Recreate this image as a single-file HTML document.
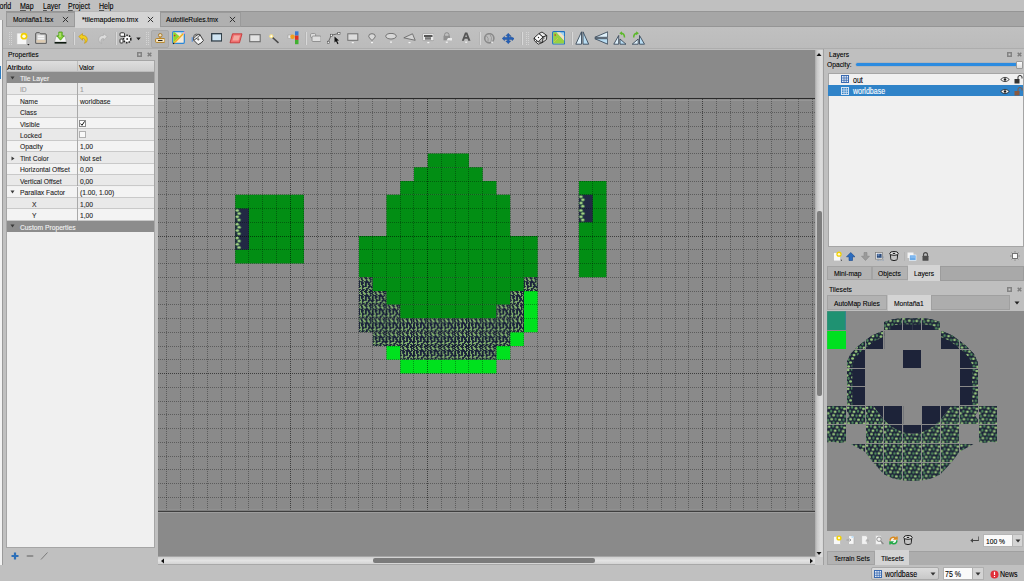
<!DOCTYPE html>
<html><head><meta charset="utf-8">
<style>
*{margin:0;padding:0;box-sizing:border-box}
html,body{width:1024px;height:581px;overflow:hidden;background:#c0c0c0;font-family:"Liberation Sans",sans-serif;font-size:7.8px;color:#000}
.a{position:absolute}
u{text-decoration-thickness:0.6px;text-underline-offset:0.6px;text-decoration-color:#555}
.t{position:absolute;white-space:nowrap;line-height:1;-webkit-text-stroke:0.1px currentColor;transform:scaleX(0.86);transform-origin:0 0}
</style></head><body>

<div class="a" style="left:0px;top:0px;width:1024px;height:11px;background:#c0c0c0"></div>
<div class="t" style="left:-6.6px;top:2.8px;font-size:8.2px">World</div>
<div class="t" style="left:20px;top:2.8px;font-size:8.2px"><u>M</u>ap</div>
<div class="t" style="left:43px;top:2.8px;font-size:8.2px"><u>L</u>ayer</div>
<div class="t" style="left:68px;top:2.8px;font-size:8.2px"><u>P</u>roject</div>
<div class="t" style="left:98.5px;top:2.8px;font-size:8.2px"><u>H</u>elp</div>
<div class="a" style="left:0px;top:11px;width:1024px;height:17px;background:#c0c0c0"></div>
<div class="a" style="left:6px;top:11px;width:1018px;height:16px;background:#a6a6a6;border-top:1px solid #959595;border-bottom:1px solid #959595"></div>
<div class="a" style="left:6px;top:11.5px;width:69px;height:15.5px;background:#b0b0b0;border:1px solid #9a9a9a"></div>
<div class="t" style="left:12.5px;top:15.7px;">Montaña1.tsx</div>
<div class="a" style="left:75px;top:11px;width:85px;height:17px;background:#d4d4d4;border-top:1px solid #b8b8b8"></div>
<div class="t" style="left:82.3px;top:15.7px;transform:scaleX(0.9)">*tilemapdemo.tmx</div>
<div class="a" style="left:159.5px;top:11.5px;width:81px;height:15.5px;background:#b0b0b0;border:1px solid #9a9a9a"></div>
<div class="t" style="left:166.3px;top:15.7px;">AutotileRules.tmx</div>
<svg class="a" style="left:62.400000000000006px;top:16.2px" width="7" height="7" viewBox="0 0 7 7"><path d="M0.9 0.9L6.1 6.1M6.1 0.9L0.9 6.1" stroke="#333" stroke-width="1"/></svg>
<svg class="a" style="left:146.7px;top:16.2px" width="7" height="7" viewBox="0 0 7 7"><path d="M0.9 0.9L6.1 6.1M6.1 0.9L0.9 6.1" stroke="#333" stroke-width="1"/></svg>
<svg class="a" style="left:228.5px;top:16.2px" width="7" height="7" viewBox="0 0 7 7"><path d="M0.9 0.9L6.1 6.1M6.1 0.9L0.9 6.1" stroke="#333" stroke-width="1"/></svg>
<div class="a" style="left:0px;top:28px;width:1024px;height:21px;background:linear-gradient(#c0c0c0,#bbbbbb)"></div>
<div class="a" style="left:0px;top:48px;width:1024px;height:1px;background:#adadad"></div>
<svg class="a" style="left:9px;top:32px" width="3" height="13" viewBox="0 0 3 13"><rect x="0" y="0" width="1" height="1" fill="#d4d4d4"/><rect x="2" y="0" width="1" height="1" fill="#d4d4d4"/><rect x="0" y="2" width="1" height="1" fill="#d4d4d4"/><rect x="2" y="2" width="1" height="1" fill="#d4d4d4"/><rect x="0" y="4" width="1" height="1" fill="#d4d4d4"/><rect x="2" y="4" width="1" height="1" fill="#d4d4d4"/><rect x="0" y="6" width="1" height="1" fill="#d4d4d4"/><rect x="2" y="6" width="1" height="1" fill="#d4d4d4"/><rect x="0" y="8" width="1" height="1" fill="#d4d4d4"/><rect x="2" y="8" width="1" height="1" fill="#d4d4d4"/><rect x="0" y="10" width="1" height="1" fill="#d4d4d4"/><rect x="2" y="10" width="1" height="1" fill="#d4d4d4"/><rect x="0" y="12" width="1" height="1" fill="#d4d4d4"/><rect x="2" y="12" width="1" height="1" fill="#d4d4d4"/></svg>
<svg class="a" style="left:16px;top:32px" width="14" height="14" viewBox="0 0 14 14"><rect x="0.8" y="1" width="10" height="11.5" fill="#f6f6f6" stroke="#bdbdbd" stroke-width="0.8"/><circle cx="8" cy="4.2" r="3.4" fill="#f2d000"/><circle cx="8" cy="4.2" r="1.8" fill="#fffbe0"/><path d="M11.2 12L13.6 12L12.4 13.4Z" fill="#222"/></svg>
<svg class="a" style="left:35px;top:32px" width="12" height="12" viewBox="0 0 12 12"><path d="M0.7 11.3V1.8Q0.7 0.7 1.8 0.7H4.5L5.5 1.8H10.2Q11.3 1.8 11.3 2.9V11.3Z" fill="#c6c6c6" stroke="#4a4a4a" stroke-width="0.9"/><rect x="2.6" y="3.3" width="6.8" height="4.2" fill="#f6f6f6"/><path d="M2.6 5.4H9.4" stroke="#bbb" stroke-width="0.5"/><rect x="1.5" y="8" width="9" height="2.6" fill="#dccab0"/></svg>
<svg class="a" style="left:54px;top:31px" width="13" height="13" viewBox="0 0 13 13"><path d="M1.8 5.5L11.2 5.5L12.4 11L0.6 11Z" fill="#f6f6f6" stroke="#9a9a9a" stroke-width="0.6"/><rect x="0.6" y="11" width="11.8" height="1.6" fill="#0e1a10"/><path d="M4.8 1H8.2V4.8H10.2L6.5 9.2L2.8 4.8H4.8Z" fill="#8ad23a" stroke="#4aa018" stroke-width="0.8"/><path d="M6 2V6" stroke="#e6f0c0" stroke-width="0.8"/></svg>
<div class="a" style="left:72.5px;top:32px;width:1px;height:13px;background:#b4b4b4;box-shadow:1px 0 0 #d8d8d8"></div>
<svg class="a" style="left:78px;top:33px" width="10" height="11" viewBox="0 0 10 11"><path d="M0.8 3.5L4.5 0.6V2.4Q9.5 2.4 9.3 7Q9 9.8 6.5 10.3Q8 8 6.6 6.2Q5.8 5.3 4.5 5.5V7.3Z" fill="#f2cf1e" stroke="#c49200" stroke-width="0.6"/></svg>
<svg class="a" style="left:97.5px;top:33px" width="10" height="11" viewBox="0 0 10 11"><path d="M9.2 3.5L5.5 0.6V2.4Q0.5 2.4 0.7 7Q1 9.8 3.5 10.3Q2 8 3.4 6.2Q4.2 5.3 5.5 5.5V7.3Z" fill="#dcdcdc" stroke="#a8a8a8" stroke-width="0.6"/></svg>
<div class="a" style="left:114.5px;top:32px;width:1px;height:13px;background:#b4b4b4;box-shadow:1px 0 0 #d8d8d8"></div>
<svg class="a" style="left:119px;top:32px" width="13" height="12" viewBox="0 0 13 12"><rect x="1" y="0.8" width="4.5" height="3.5" rx="1" fill="#fff" stroke="#222" stroke-width="0.9"/><rect x="1" y="7" width="3" height="4" rx="0.8" fill="#fff" stroke="#222" stroke-width="0.9"/><circle cx="8.2" cy="7" r="3.6" fill="#fff" stroke="#222" stroke-width="1.6" stroke-dasharray="1.6 1"/><circle cx="8.2" cy="7" r="1" fill="#333"/></svg>
<svg class="a" style="left:135.5px;top:37px" width="5" height="4" viewBox="0 0 5 4"><path d="M0.3 0.5H4.7L2.5 3.2Z" fill="#222"/></svg>
<svg class="a" style="left:146px;top:32px" width="3" height="13" viewBox="0 0 3 13"><rect x="0" y="0" width="1" height="1" fill="#d4d4d4"/><rect x="2" y="0" width="1" height="1" fill="#d4d4d4"/><rect x="0" y="2" width="1" height="1" fill="#d4d4d4"/><rect x="2" y="2" width="1" height="1" fill="#d4d4d4"/><rect x="0" y="4" width="1" height="1" fill="#d4d4d4"/><rect x="2" y="4" width="1" height="1" fill="#d4d4d4"/><rect x="0" y="6" width="1" height="1" fill="#d4d4d4"/><rect x="2" y="6" width="1" height="1" fill="#d4d4d4"/><rect x="0" y="8" width="1" height="1" fill="#d4d4d4"/><rect x="2" y="8" width="1" height="1" fill="#d4d4d4"/><rect x="0" y="10" width="1" height="1" fill="#d4d4d4"/><rect x="2" y="10" width="1" height="1" fill="#d4d4d4"/><rect x="0" y="12" width="1" height="1" fill="#d4d4d4"/><rect x="2" y="12" width="1" height="1" fill="#d4d4d4"/></svg>
<div class="a" style="left:150.5px;top:30px;width:18.5px;height:17.5px;background:#b3b3b3;border:1px solid #a9a9a9;border-radius:2px"></div>
<svg class="a" style="left:154.5px;top:32.5px" width="10.5" height="11" viewBox="0 0 10.5 11"><circle cx="5.25" cy="2.3" r="1.8" fill="#f0e2c0" stroke="#a06a10" stroke-width="0.8"/><rect x="4.3" y="3.6" width="1.9" height="2.4" fill="#c99030"/><rect x="0.6" y="5.6" width="9.3" height="3.8" rx="0.8" fill="#f8ecd0" stroke="#b07810" stroke-width="0.9"/><rect x="3" y="7" width="4.5" height="1" fill="#222"/></svg>
<svg class="a" style="left:171.5px;top:31px" width="13.5" height="13.5" viewBox="0 0 13.5 13.5"><rect x="0.7" y="0.7" width="11.6" height="11.6" rx="1" fill="#f2e8d8" stroke="#2a86d8" stroke-width="1.2"/><path d="M8 1.3H11.7V4.8Z" fill="#8ccff2"/><path d="M1.3 1.3H2.8L8.5 6.3L2.6 11.7H1.3Z" fill="#8ed62e"/><circle cx="2.6" cy="4.6" r="0.8" fill="#e02020"/><path d="M2 12.2L11.8 2.2" stroke="#f6d23a" stroke-width="1.8"/><path d="M2.6 11.6L11.2 2.8" stroke="#e02a2a" stroke-width="0.6" stroke-dasharray="0.8 0.6"/><path d="M11.3 2.7L12.9 1.1" stroke="#e8a6d8" stroke-width="1.7"/><path d="M1.2 12.9L2.2 11.9" stroke="#111" stroke-width="1.2"/></svg>
<svg class="a" style="left:191px;top:31.5px" width="13" height="13" viewBox="0 0 13 13"><g transform="rotate(-38 7 7)"><path d="M2.8 4.5H11.2L10.4 11.5Q7 12.6 3.6 11.5Z" fill="#f4f4f4" stroke="#3a3a3a" stroke-width="0.9"/><ellipse cx="7" cy="4.5" rx="4.2" ry="1.3" fill="#dcdcdc" stroke="#3a3a3a" stroke-width="0.8"/><path d="M3.5 4.2Q7 -1.2 10.5 4.2" fill="none" stroke="#555" stroke-width="0.8"/><circle cx="7" cy="7.5" r="1.1" fill="#666"/></g><path d="M1.3 5.2V9.8" stroke="#6a96d0" stroke-width="1.4"/></svg>
<svg class="a" style="left:210.5px;top:32.5px" width="11.5" height="9.5" viewBox="0 0 11.5 9.5"><rect x="0.7" y="0.7" width="10" height="7.3" fill="#cfe4f2" stroke="#2c3a44" stroke-width="1.3"/><rect x="1" y="8.6" width="10" height="0.9" fill="#999" opacity="0.6"/></svg>
<svg class="a" style="left:228.5px;top:32.5px" width="14" height="11" viewBox="0 0 14 11"><path d="M3.5 0.8L13 0.8L10.5 9.8L1 9.8Z" fill="#f07070" stroke="#c03030" stroke-width="0.8"/><path d="M5 2.5L11 2.5L9.5 7.5L3.5 7.5Z" fill="#f4a8a0"/></svg>
<svg class="a" style="left:248.5px;top:34px" width="12" height="8.5" viewBox="0 0 12 8.5"><rect x="0.7" y="0.7" width="10.5" height="7" fill="#e2e2e2" stroke="#6c6c6c" stroke-width="1.1"/></svg>
<svg class="a" style="left:268.5px;top:34px" width="10.5" height="9.5" viewBox="0 0 10.5 9.5"><path d="M3 3L9.5 8.8" stroke="#4a4a4a" stroke-width="1.6"/><circle cx="2.3" cy="2.3" r="2" fill="#ffe680"/><circle cx="2.3" cy="2.3" r="1" fill="#fff"/></svg>
<svg class="a" style="left:286.5px;top:31px" width="12" height="13.5" viewBox="0 0 12 13.5"><rect x="1" y="4" width="4" height="3.5" fill="#e8e8e8" stroke="#999" stroke-width="0.5"/><circle cx="5.5" cy="5.8" r="2.3" fill="#f0a020"/><rect x="8" y="0.3" width="3.5" height="4.3" fill="#3a7ad0"/><rect x="8" y="4.6" width="3.5" height="4.3" fill="#e03020"/><rect x="8" y="8.9" width="3.5" height="4.3" fill="#40b030"/></svg>
<div class="a" style="left:304.5px;top:32px;width:1px;height:13px;background:#b4b4b4;box-shadow:1px 0 0 #d8d8d8"></div>
<svg class="a" style="left:309.5px;top:33px" width="11.5" height="9" viewBox="0 0 11.5 9"><rect x="0.6" y="0.6" width="5" height="4" rx="1" fill="#e6e6e6" stroke="#8a8a8a" stroke-width="0.9"/><rect x="2" y="3" width="9" height="5.5" rx="1" fill="#dedede" stroke="#8a8a8a" stroke-width="0.9"/></svg>
<svg class="a" style="left:326.5px;top:32px" width="14" height="12.5" viewBox="0 0 14 12.5"><path d="M1.2 10.2L4.3 3.2L11.8 1.5" stroke="#555" stroke-width="0.8" fill="none"/><rect x="0.2" y="9.2" width="2" height="2" fill="#fff" stroke="#333" stroke-width="0.5"/><rect x="3.3" y="2.2" width="2" height="2" fill="#fff" stroke="#333" stroke-width="0.5"/><rect x="10.8" y="0.5" width="2.2" height="2" fill="#fff" stroke="#333" stroke-width="0.5"/><path d="M7.5 4.5L7.5 10.5L9 9.2L10.5 12.2L11.5 11.6L10 8.8L12 8.5Z" fill="#111"/></svg>
<svg class="a" style="left:347px;top:32.5px" width="12" height="11" viewBox="0 0 12 11"><rect x="0.8" y="0.8" width="10" height="6.5" fill="#dcdcdc" stroke="#707070" stroke-width="1"/><rect x="4.8" y="9" width="2" height="1.2" fill="#f4f4f4"/></svg>
<svg class="a" style="left:368px;top:32.5px" width="8" height="11" viewBox="0 0 8 11"><path d="M4 7.5Q0.7 4.5 0.7 3.3Q0.7 0.7 4 0.7Q7.3 0.7 7.3 3.3Q7.3 4.5 4 7.5Z" fill="#d8d8d8" stroke="#6a6a6a" stroke-width="0.9"/><rect x="3" y="9" width="2" height="1.2" fill="#f4f4f4"/></svg>
<svg class="a" style="left:384.5px;top:33px" width="12" height="10.5" viewBox="0 0 12 10.5"><ellipse cx="6" cy="3.2" rx="5.3" ry="2.8" fill="#d8d8d8" stroke="#6a6a6a" stroke-width="0.9"/><rect x="5" y="8.5" width="2" height="1.2" fill="#f4f4f4"/></svg>
<svg class="a" style="left:402.5px;top:32.5px" width="13" height="11" viewBox="0 0 13 11"><path d="M0.8 4.8L9.5 0.8L12.2 7.3Z" fill="#d4d4d4" stroke="#6a6a6a" stroke-width="0.9"/><rect x="5.5" y="9" width="2" height="1.2" fill="#f4f4f4"/></svg>
<svg class="a" style="left:421.5px;top:32.5px" width="12.5" height="11" viewBox="0 0 12.5 11"><rect x="0.6" y="0.6" width="11.3" height="7" rx="1" fill="#ececec" stroke="#9a9a9a" stroke-width="0.7"/><rect x="2" y="2" width="8.5" height="2" fill="#555"/><rect x="3" y="4.2" width="6" height="2.5" fill="#777"/><rect x="5.3" y="9" width="2" height="1.2" fill="#f4f4f4"/></svg>
<svg class="a" style="left:442px;top:32px" width="10.5" height="11.5" viewBox="0 0 10.5 11.5"><path d="M2.6 4V2.6Q2.6 0.7 4.8 0.7Q7 0.7 7 2.6V4" stroke="#8a8a8a" stroke-width="1" fill="none"/><rect x="1.5" y="3.8" width="6.5" height="4.5" fill="#909090"/><path d="M6 6L10 6L10 8.6L4.5 8.6Z" fill="#eaeaea"/><rect x="3.8" y="9.6" width="2" height="1.2" fill="#f4f4f4"/></svg>
<svg class="a" style="left:460.5px;top:32px" width="10.5" height="11.5" viewBox="0 0 10.5 11.5"><path d="M0.8 8.7L4 0.5H6.3L9.5 8.7H7.2L6.6 6.8H3.6L3 8.7ZM4.2 5H6L5.1 2.3Z" fill="#555"/><rect x="4.2" y="9.6" width="2" height="1.2" fill="#f4f4f4"/></svg>
<div class="a" style="left:478.5px;top:32px;width:1px;height:13px;background:#b4b4b4;box-shadow:1px 0 0 #d8d8d8"></div>
<svg class="a" style="left:482.5px;top:32.5px" width="13" height="11" viewBox="0 0 13 11"><circle cx="6.3" cy="5.3" r="4.6" fill="none" stroke="#8a8a8a" stroke-width="1.6"/><path d="M3.5 3Q6 5 5 8.5M7 1.5Q9.5 4 8 9" stroke="#9a9a9a" stroke-width="1" fill="none"/><rect x="8.3" y="8.5" width="1.6" height="1.6" fill="#eee"/></svg>
<svg class="a" style="left:501.5px;top:32.5px" width="12.5" height="11" viewBox="0 0 12.5 11"><path d="M6.25 0.3L8.7 2.8H7.2V4.3H8.7V2.8V4.3H10L12.3 5.5L10 7.7V6.5H7.2V8H8.7L6.25 10.7L3.8 8H5.3V6.5H2.5V7.7L0.2 5.5L2.5 3.3V4.5H5.3V2.8H3.8Z" fill="#2560b8" stroke="#1a4a90" stroke-width="0.4"/></svg>
<div class="a" style="left:520.5px;top:32px;width:1px;height:13px;background:#b4b4b4;box-shadow:1px 0 0 #d8d8d8"></div>
<svg class="a" style="left:526px;top:32px" width="3" height="13" viewBox="0 0 3 13"><rect x="0" y="0" width="1" height="1" fill="#d4d4d4"/><rect x="2" y="0" width="1" height="1" fill="#d4d4d4"/><rect x="0" y="2" width="1" height="1" fill="#d4d4d4"/><rect x="2" y="2" width="1" height="1" fill="#d4d4d4"/><rect x="0" y="4" width="1" height="1" fill="#d4d4d4"/><rect x="2" y="4" width="1" height="1" fill="#d4d4d4"/><rect x="0" y="6" width="1" height="1" fill="#d4d4d4"/><rect x="2" y="6" width="1" height="1" fill="#d4d4d4"/><rect x="0" y="8" width="1" height="1" fill="#d4d4d4"/><rect x="2" y="8" width="1" height="1" fill="#d4d4d4"/><rect x="0" y="10" width="1" height="1" fill="#d4d4d4"/><rect x="2" y="10" width="1" height="1" fill="#d4d4d4"/><rect x="0" y="12" width="1" height="1" fill="#d4d4d4"/><rect x="2" y="12" width="1" height="1" fill="#d4d4d4"/></svg>
<svg class="a" style="left:532.5px;top:31px" width="15" height="14" viewBox="0 0 15 14"><path d="M1 7L6 2.5L10 6L5 10.8Z" fill="#fff" stroke="#222" stroke-width="0.9"/><path d="M6 2.5L9 1L13.8 4.5L10 6Z" fill="#eaeaea" stroke="#222" stroke-width="0.9"/><path d="M10 6L13.8 4.5L13.5 8.5L9.5 11.5Z" fill="#ddd" stroke="#222" stroke-width="0.9"/><path d="M5 10.8L1 7L1.5 9.8L5.3 13.2L9.5 11.5Z" fill="#f4f4f4" stroke="#222" stroke-width="0.9"/><circle cx="5.5" cy="6.5" r="0.7" fill="#222"/><circle cx="11" cy="7" r="0.6" fill="#222"/><circle cx="3.5" cy="10" r="0.6" fill="#222"/></svg>
<svg class="a" style="left:551.5px;top:30.5px" width="13.5" height="14" viewBox="0 0 13.5 14"><rect x="0.7" y="0.7" width="12" height="12.3" rx="1" fill="#9fd4f0" stroke="#1e70c0" stroke-width="1.2"/><path d="M1.3 1.3H4.5L12.1 9.5V12.4H1.3Z" fill="#98d040"/><path d="M4.5 1.3H8L12.1 5.5V9.5Z" fill="#f4e2c0"/><circle cx="3.2" cy="4" r="0.8" fill="#e02020"/><path d="M2 11L6 7" stroke="#d8c050" stroke-width="0.8"/></svg>
<div class="a" style="left:571px;top:32px;width:1px;height:13px;background:#b4b4b4;box-shadow:1px 0 0 #d8d8d8"></div>
<svg class="a" style="left:575px;top:31px" width="14.5" height="14" viewBox="0 0 14.5 14"><path d="M6.5 0.8L6.5 13.2L0.8 13.2Z" fill="#dff0fa" stroke="#3a4a5a" stroke-width="0.9"/><path d="M8 0.8L8 13.2L13.7 13.2Z" fill="#b8dcf2" stroke="#3a4a5a" stroke-width="0.9"/></svg>
<svg class="a" style="left:593.5px;top:31px" width="14.5" height="14" viewBox="0 0 14.5 14"><path d="M13.7 0.8L13.7 6.3L0.8 6.3Z" fill="#dff0fa" stroke="#3a4a5a" stroke-width="0.9"/><path d="M13.7 7.7L13.7 13.2L0.8 7.7Z" fill="#b8dcf2" stroke="#3a4a5a" stroke-width="0.9"/></svg>
<svg class="a" style="left:612.5px;top:31px" width="14" height="14" viewBox="0 0 14 14"><path d="M5.7 4.5L5.7 13.2L0.8 13.2Z" fill="#dff0fa" stroke="#3a4a5a" stroke-width="0.9"/><path d="M7 8L7 13.2L13 13.2Z" fill="#b8dcf2" stroke="#3a4a5a" stroke-width="0.9"/><path d="M11.5 6.5Q11.5 2.2 8 2.2" stroke="#5cb82a" stroke-width="1.5" fill="none"/><path d="M6.3 2.2L9 0.2V4.2Z" fill="#5cb82a"/></svg>
<svg class="a" style="left:631px;top:31px" width="14.5" height="14" viewBox="0 0 14.5 14"><path d="M8.5 4.5L8.5 13.2L13.5 13.2Z" fill="#b8dcf2" stroke="#3a4a5a" stroke-width="0.9"/><path d="M7.2 8L7.2 13.2L1.2 13.2Z" fill="#dff0fa" stroke="#3a4a5a" stroke-width="0.9"/><path d="M2.7 6.5Q2.7 2.2 6.2 2.2" stroke="#5cb82a" stroke-width="1.5" fill="none"/><path d="M7.9 2.2L5.2 0.2V4.2Z" fill="#5cb82a"/></svg>
<div class="a" style="left:0px;top:20px;width:3px;height:545px;background:#f2f2f2;border-right:1px solid #9a9a9a"></div>
<div class="a" style="left:0px;top:66px;width:1px;height:13px;background:#2a7ac0"></div>
<div class="t" style="left:8px;top:51.2px;">Properties</div>
<div class="a" style="left:6px;top:60px;width:149px;height:488px;background:#f0f0f0;border:1px solid #a5a5a5"></div>
<div class="a" style="left:7px;top:61px;width:147px;height:11px;background:linear-gradient(#dedede,#cfcfcf);border-bottom:1px solid #bcbcbc"></div>
<div class="a" style="left:77px;top:61px;width:1px;height:11px;background:#bdbdbd"></div>
<div class="t" style="left:7.3px;top:63.5px;transform:scaleX(0.92)">Atributo</div>
<div class="t" style="left:79px;top:63.5px;">Valor</div>
<div class="a" style="left:7px;top:72.0px;width:147px;height:11.45px;background:#8c8c8c"></div>
<svg class="a" style="left:10px;top:75.5px" width="5" height="4" viewBox="0 0 5 4"><path d="M0.5 0.5L4.5 0.5L2.5 3.5Z" fill="#3a3a3a"/></svg>
<div class="t" style="left:19.5px;top:74.7px;color:#f4f4f4">Tile Layer</div>
<div class="a" style="left:7px;top:83.45px;width:147px;height:11.45px;background:#e9e9e9;border-bottom:1px solid #c9c9c9"></div>
<div class="a" style="left:77px;top:83.45px;width:1px;height:11.45px;background:#a9a9a9"></div>
<div class="t" style="left:19.5px;top:86.15px;color:#9a9a9a">ID</div>
<div class="t" style="left:80px;top:86.15px;color:#9a9a9a">1</div>
<div class="a" style="left:7px;top:94.9px;width:147px;height:11.45px;background:#f3f3f3;border-bottom:1px solid #c9c9c9"></div>
<div class="a" style="left:77px;top:94.9px;width:1px;height:11.45px;background:#a9a9a9"></div>
<div class="t" style="left:19.5px;top:97.60000000000001px;color:#1c1c1c">Name</div>
<div class="t" style="left:80px;top:97.60000000000001px;color:#1c1c1c">worldbase</div>
<div class="a" style="left:7px;top:106.35px;width:147px;height:11.45px;background:#e9e9e9;border-bottom:1px solid #c9c9c9"></div>
<div class="a" style="left:77px;top:106.35px;width:1px;height:11.45px;background:#a9a9a9"></div>
<div class="t" style="left:19.5px;top:109.05px;color:#1c1c1c">Class</div>
<div class="a" style="left:7px;top:117.8px;width:147px;height:11.45px;background:#f3f3f3;border-bottom:1px solid #c9c9c9"></div>
<div class="a" style="left:77px;top:117.8px;width:1px;height:11.45px;background:#a9a9a9"></div>
<div class="t" style="left:19.5px;top:120.5px;color:#1c1c1c">Visible</div>
<div class="a" style="left:79px;top:119.8px;width:7px;height:7px;background:#fff;border:1px solid #8a8a8a"></div>
<svg class="a" style="left:79px;top:119.8px" width="7" height="7" viewBox="0 0 7 7"><path d="M1.6 3.6L3 5.3L5.6 1.4" stroke="#111" stroke-width="1" fill="none"/></svg>
<div class="a" style="left:7px;top:129.25px;width:147px;height:11.45px;background:#e9e9e9;border-bottom:1px solid #c9c9c9"></div>
<div class="a" style="left:77px;top:129.25px;width:1px;height:11.45px;background:#a9a9a9"></div>
<div class="t" style="left:19.5px;top:131.95px;color:#1c1c1c">Locked</div>
<div class="a" style="left:79px;top:131.25px;width:7px;height:7px;background:#f8f8f8;border:1px solid #b0b0b0"></div>
<div class="a" style="left:7px;top:140.7px;width:147px;height:11.45px;background:#f3f3f3;border-bottom:1px solid #c9c9c9"></div>
<div class="a" style="left:77px;top:140.7px;width:1px;height:11.45px;background:#a9a9a9"></div>
<div class="t" style="left:19.5px;top:143.39999999999998px;color:#1c1c1c">Opacity</div>
<div class="t" style="left:80px;top:143.39999999999998px;color:#1c1c1c">1,00</div>
<div class="a" style="left:7px;top:152.15px;width:147px;height:11.45px;background:#e9e9e9;border-bottom:1px solid #c9c9c9"></div>
<div class="a" style="left:77px;top:152.15px;width:1px;height:11.45px;background:#a9a9a9"></div>
<div class="t" style="left:19.5px;top:154.85px;color:#1c1c1c">Tint Color</div>
<svg class="a" style="left:11px;top:155.65px" width="4" height="5" viewBox="0 0 4 5"><path d="M0.5 0.5L3.5 2.5L0.5 4.5Z" fill="#3a3a3a"/></svg>
<div class="t" style="left:80px;top:154.85px;color:#1c1c1c">Not set</div>
<div class="a" style="left:7px;top:163.6px;width:147px;height:11.45px;background:#f3f3f3;border-bottom:1px solid #c9c9c9"></div>
<div class="a" style="left:77px;top:163.6px;width:1px;height:11.45px;background:#a9a9a9"></div>
<div class="t" style="left:19.5px;top:166.29999999999998px;color:#1c1c1c">Horizontal Offset</div>
<div class="t" style="left:80px;top:166.29999999999998px;color:#1c1c1c">0,00</div>
<div class="a" style="left:7px;top:175.05px;width:147px;height:11.45px;background:#e9e9e9;border-bottom:1px solid #c9c9c9"></div>
<div class="a" style="left:77px;top:175.05px;width:1px;height:11.45px;background:#a9a9a9"></div>
<div class="t" style="left:19.5px;top:177.75px;color:#1c1c1c">Vertical Offset</div>
<div class="t" style="left:80px;top:177.75px;color:#1c1c1c">0,00</div>
<div class="a" style="left:7px;top:186.5px;width:147px;height:11.45px;background:#f3f3f3;border-bottom:1px solid #c9c9c9"></div>
<div class="a" style="left:77px;top:186.5px;width:1px;height:11.45px;background:#a9a9a9"></div>
<div class="t" style="left:19.5px;top:189.2px;color:#1c1c1c">Parallax Factor</div>
<svg class="a" style="left:10px;top:190.0px" width="5" height="4" viewBox="0 0 5 4"><path d="M0.5 0.5L4.5 0.5L2.5 3.5Z" fill="#3a3a3a"/></svg>
<div class="t" style="left:80px;top:189.2px;color:#1c1c1c">(1.00, 1.00)</div>
<div class="a" style="left:7px;top:197.95px;width:147px;height:11.45px;background:#e9e9e9;border-bottom:1px solid #c9c9c9"></div>
<div class="a" style="left:77px;top:197.95px;width:1px;height:11.45px;background:#a9a9a9"></div>
<div class="t" style="left:32px;top:200.64999999999998px;color:#1c1c1c">X</div>
<div class="t" style="left:80px;top:200.64999999999998px;color:#1c1c1c">1,00</div>
<div class="a" style="left:7px;top:209.4px;width:147px;height:11.45px;background:#f3f3f3;border-bottom:1px solid #c9c9c9"></div>
<div class="a" style="left:77px;top:209.4px;width:1px;height:11.45px;background:#a9a9a9"></div>
<div class="t" style="left:32px;top:212.1px;color:#1c1c1c">Y</div>
<div class="t" style="left:80px;top:212.1px;color:#1c1c1c">1,00</div>
<div class="a" style="left:7px;top:220.85px;width:147px;height:11.45px;background:#8c8c8c"></div>
<svg class="a" style="left:10px;top:224.35px" width="5" height="4" viewBox="0 0 5 4"><path d="M0.5 0.5L4.5 0.5L2.5 3.5Z" fill="#3a3a3a"/></svg>
<div class="t" style="left:19.5px;top:223.54999999999998px;color:#f4f4f4">Custom Properties</div>
<svg class="a" style="left:11px;top:552px" width="8" height="8" viewBox="0 0 8 8"><path d="M4 0.5V7.5M0.5 4H7.5" stroke="#2c6fb8" stroke-width="2.2"/></svg>
<svg class="a" style="left:26px;top:554px" width="8" height="4" viewBox="0 0 8 4"><rect x="0.5" y="1" width="7" height="2" rx="1" fill="#8e8e8e"/></svg>
<svg class="a" style="left:40px;top:552px" width="8" height="8" viewBox="0 0 8 8"><path d="M1 7.5L7.5 0.5" stroke="#7a7a7a" stroke-width="1"/></svg>
<svg class="a" style="left:158px;top:50px" width="657" height="506.5" viewBox="158 50 657 506.5">
<defs><pattern id="moss" x="152.7" y="98.5" width="13.75" height="13.75" patternUnits="userSpaceOnUse"><rect width="13.75" height="13.75" fill="#1b233b"/><rect x="0.000" y="0.000" width="0.982" height="0.982" fill="#82b06e"/><rect x="2.946" y="0.000" width="0.982" height="0.982" fill="#82b06e"/><rect x="3.929" y="0.000" width="0.982" height="0.982" fill="#82b06e"/><rect x="7.857" y="0.000" width="0.982" height="0.982" fill="#82b06e"/><rect x="8.839" y="0.000" width="0.982" height="0.982" fill="#82b06e"/><rect x="0.982" y="0.982" width="0.982" height="0.982" fill="#82b06e"/><rect x="3.929" y="0.982" width="0.982" height="0.982" fill="#82b06e"/><rect x="4.911" y="0.982" width="0.982" height="0.982" fill="#82b06e"/><rect x="8.839" y="0.982" width="0.982" height="0.982" fill="#82b06e"/><rect x="11.786" y="0.982" width="0.982" height="0.982" fill="#82b06e"/><rect x="0.000" y="1.964" width="0.982" height="0.982" fill="#82b06e"/><rect x="0.982" y="1.964" width="0.982" height="0.982" fill="#82b06e"/><rect x="3.929" y="1.964" width="0.982" height="0.982" fill="#82b06e"/><rect x="4.911" y="1.964" width="0.982" height="0.982" fill="#82b06e"/><rect x="5.893" y="1.964" width="0.982" height="0.982" fill="#82b06e"/><rect x="7.857" y="1.964" width="0.982" height="0.982" fill="#82b06e"/><rect x="8.839" y="1.964" width="0.982" height="0.982" fill="#82b06e"/><rect x="9.821" y="1.964" width="0.982" height="0.982" fill="#82b06e"/><rect x="0.982" y="2.946" width="0.982" height="0.982" fill="#82b06e"/><rect x="1.964" y="2.946" width="0.982" height="0.982" fill="#82b06e"/><rect x="4.911" y="2.946" width="0.982" height="0.982" fill="#82b06e"/><rect x="5.893" y="2.946" width="0.982" height="0.982" fill="#82b06e"/><rect x="8.839" y="2.946" width="0.982" height="0.982" fill="#82b06e"/><rect x="9.821" y="2.946" width="0.982" height="0.982" fill="#82b06e"/><rect x="11.786" y="2.946" width="0.982" height="0.982" fill="#82b06e"/><rect x="3.929" y="3.929" width="0.982" height="0.982" fill="#82b06e"/><rect x="9.821" y="3.929" width="0.982" height="0.982" fill="#82b06e"/><rect x="12.768" y="3.929" width="0.982" height="0.982" fill="#82b06e"/><rect x="0.982" y="4.911" width="0.982" height="0.982" fill="#82b06e"/><rect x="4.911" y="4.911" width="0.982" height="0.982" fill="#82b06e"/><rect x="11.786" y="4.911" width="0.982" height="0.982" fill="#82b06e"/><rect x="0.982" y="5.893" width="0.982" height="0.982" fill="#82b06e"/><rect x="4.911" y="5.893" width="0.982" height="0.982" fill="#82b06e"/><rect x="7.857" y="5.893" width="0.982" height="0.982" fill="#82b06e"/><rect x="10.804" y="5.893" width="0.982" height="0.982" fill="#82b06e"/><rect x="11.786" y="5.893" width="0.982" height="0.982" fill="#82b06e"/><rect x="0.982" y="6.875" width="0.982" height="0.982" fill="#82b06e"/><rect x="3.929" y="6.875" width="0.982" height="0.982" fill="#82b06e"/><rect x="4.911" y="6.875" width="0.982" height="0.982" fill="#82b06e"/><rect x="7.857" y="6.875" width="0.982" height="0.982" fill="#82b06e"/><rect x="11.786" y="6.875" width="0.982" height="0.982" fill="#82b06e"/><rect x="0.982" y="7.857" width="0.982" height="0.982" fill="#82b06e"/><rect x="1.964" y="7.857" width="0.982" height="0.982" fill="#82b06e"/><rect x="4.911" y="7.857" width="0.982" height="0.982" fill="#82b06e"/><rect x="7.857" y="7.857" width="0.982" height="0.982" fill="#82b06e"/><rect x="8.839" y="7.857" width="0.982" height="0.982" fill="#82b06e"/><rect x="11.786" y="7.857" width="0.982" height="0.982" fill="#82b06e"/><rect x="1.964" y="8.839" width="0.982" height="0.982" fill="#82b06e"/><rect x="7.857" y="8.839" width="0.982" height="0.982" fill="#82b06e"/><rect x="0.982" y="9.821" width="0.982" height="0.982" fill="#82b06e"/><rect x="1.964" y="9.821" width="0.982" height="0.982" fill="#82b06e"/><rect x="4.911" y="9.821" width="0.982" height="0.982" fill="#82b06e"/><rect x="5.893" y="9.821" width="0.982" height="0.982" fill="#82b06e"/><rect x="6.875" y="9.821" width="0.982" height="0.982" fill="#82b06e"/><rect x="7.857" y="9.821" width="0.982" height="0.982" fill="#82b06e"/><rect x="10.804" y="9.821" width="0.982" height="0.982" fill="#82b06e"/><rect x="0.000" y="10.804" width="0.982" height="0.982" fill="#82b06e"/><rect x="0.982" y="10.804" width="0.982" height="0.982" fill="#82b06e"/><rect x="1.964" y="10.804" width="0.982" height="0.982" fill="#82b06e"/><rect x="3.929" y="10.804" width="0.982" height="0.982" fill="#82b06e"/><rect x="4.911" y="10.804" width="0.982" height="0.982" fill="#82b06e"/><rect x="5.893" y="10.804" width="0.982" height="0.982" fill="#82b06e"/><rect x="9.821" y="10.804" width="0.982" height="0.982" fill="#82b06e"/><rect x="10.804" y="10.804" width="0.982" height="0.982" fill="#82b06e"/><rect x="11.786" y="10.804" width="0.982" height="0.982" fill="#82b06e"/><rect x="1.964" y="11.786" width="0.982" height="0.982" fill="#82b06e"/><rect x="5.893" y="11.786" width="0.982" height="0.982" fill="#82b06e"/><rect x="8.839" y="11.786" width="0.982" height="0.982" fill="#82b06e"/><rect x="11.786" y="11.786" width="0.982" height="0.982" fill="#82b06e"/><rect x="0.982" y="12.768" width="0.982" height="0.982" fill="#82b06e"/><rect x="4.911" y="12.768" width="0.982" height="0.982" fill="#82b06e"/><rect x="8.839" y="12.768" width="0.982" height="0.982" fill="#82b06e"/><rect x="9.821" y="12.768" width="0.982" height="0.982" fill="#82b06e"/></pattern></defs>
<rect x="158" y="50" width="657" height="506.5" fill="#8a8a8a"/>
<rect x="235.20" y="194.75" width="68.75" height="68.75" fill="#028e14"/>
<rect x="235.20" y="208.50" width="13.75" height="41.25" fill="#222944"/><ellipse cx="237.20" cy="210.40" rx="1.9" ry="1.5" fill="#a2cc84" stroke="#3b6a4c" stroke-width="0.7"/><ellipse cx="239.10" cy="213.50" rx="1.9" ry="1.5" fill="#a2cc84" stroke="#3b6a4c" stroke-width="0.7"/><ellipse cx="237.30" cy="216.80" rx="1.9" ry="1.5" fill="#a2cc84" stroke="#3b6a4c" stroke-width="0.7"/><ellipse cx="239.00" cy="219.90" rx="1.9" ry="1.5" fill="#a2cc84" stroke="#3b6a4c" stroke-width="0.7"/><ellipse cx="237.20" cy="224.15" rx="1.9" ry="1.5" fill="#a2cc84" stroke="#3b6a4c" stroke-width="0.7"/><ellipse cx="239.10" cy="227.25" rx="1.9" ry="1.5" fill="#a2cc84" stroke="#3b6a4c" stroke-width="0.7"/><ellipse cx="237.30" cy="230.55" rx="1.9" ry="1.5" fill="#a2cc84" stroke="#3b6a4c" stroke-width="0.7"/><ellipse cx="239.00" cy="233.65" rx="1.9" ry="1.5" fill="#a2cc84" stroke="#3b6a4c" stroke-width="0.7"/><ellipse cx="237.20" cy="237.90" rx="1.9" ry="1.5" fill="#a2cc84" stroke="#3b6a4c" stroke-width="0.7"/><ellipse cx="239.10" cy="241.00" rx="1.9" ry="1.5" fill="#a2cc84" stroke="#3b6a4c" stroke-width="0.7"/><ellipse cx="237.30" cy="244.30" rx="1.9" ry="1.5" fill="#a2cc84" stroke="#3b6a4c" stroke-width="0.7"/><ellipse cx="239.00" cy="247.40" rx="1.9" ry="1.5" fill="#a2cc84" stroke="#3b6a4c" stroke-width="0.7"/>
<rect x="578.95" y="181.00" width="27.50" height="96.25" fill="#028e14"/>
<rect x="578.95" y="194.75" width="13.75" height="27.50" fill="#222944"/><ellipse cx="580.95" cy="196.65" rx="1.9" ry="1.5" fill="#a2cc84" stroke="#3b6a4c" stroke-width="0.7"/><ellipse cx="582.85" cy="199.75" rx="1.9" ry="1.5" fill="#a2cc84" stroke="#3b6a4c" stroke-width="0.7"/><ellipse cx="581.05" cy="203.05" rx="1.9" ry="1.5" fill="#a2cc84" stroke="#3b6a4c" stroke-width="0.7"/><ellipse cx="582.75" cy="206.15" rx="1.9" ry="1.5" fill="#a2cc84" stroke="#3b6a4c" stroke-width="0.7"/><ellipse cx="580.95" cy="210.40" rx="1.9" ry="1.5" fill="#a2cc84" stroke="#3b6a4c" stroke-width="0.7"/><ellipse cx="582.85" cy="213.50" rx="1.9" ry="1.5" fill="#a2cc84" stroke="#3b6a4c" stroke-width="0.7"/><ellipse cx="581.05" cy="216.80" rx="1.9" ry="1.5" fill="#a2cc84" stroke="#3b6a4c" stroke-width="0.7"/><ellipse cx="582.75" cy="219.90" rx="1.9" ry="1.5" fill="#a2cc84" stroke="#3b6a4c" stroke-width="0.7"/>
<rect x="427.70" y="153.50" width="41.25" height="13.75" fill="#028e14"/>
<rect x="413.95" y="167.25" width="68.75" height="13.75" fill="#028e14"/>
<rect x="400.20" y="181.00" width="96.25" height="13.75" fill="#028e14"/>
<rect x="386.45" y="194.75" width="123.75" height="41.25" fill="#028e14"/>
<rect x="358.95" y="236.00" width="178.75" height="41.25" fill="#028e14"/>
<rect x="358.95" y="277.25" width="13.75" height="13.75" fill="url(#moss)"/>
<rect x="372.70" y="277.25" width="151.25" height="13.75" fill="#028e14"/>
<rect x="523.95" y="277.25" width="13.75" height="13.75" fill="url(#moss)"/>
<rect x="358.95" y="291.00" width="27.50" height="13.75" fill="url(#moss)"/>
<rect x="386.45" y="291.00" width="123.75" height="13.75" fill="#028e14"/>
<rect x="510.20" y="291.00" width="13.75" height="13.75" fill="url(#moss)"/>
<rect x="523.95" y="291.00" width="13.75" height="41.25" fill="#00e11e"/>
<rect x="358.95" y="304.75" width="41.25" height="13.75" fill="url(#moss)"/>
<rect x="400.20" y="304.75" width="96.25" height="13.75" fill="#028e14"/>
<rect x="496.45" y="304.75" width="27.50" height="13.75" fill="url(#moss)"/>
<rect x="358.95" y="318.50" width="165.00" height="13.75" fill="url(#moss)"/>
<rect x="372.70" y="332.25" width="137.50" height="13.75" fill="url(#moss)"/>
<rect x="510.20" y="332.25" width="13.75" height="13.75" fill="#00e11e"/>
<rect x="386.45" y="346.00" width="13.75" height="13.75" fill="#00e11e"/>
<rect x="400.20" y="346.00" width="96.25" height="13.75" fill="url(#moss)"/>
<rect x="496.45" y="346.00" width="13.75" height="13.75" fill="#00e11e"/>
<rect x="400.20" y="359.75" width="96.25" height="13.75" fill="#00e11e"/>
<line x1="166.5" y1="99" x2="166.5" y2="511" stroke="#000" stroke-opacity="0.33" stroke-width="1" stroke-dasharray="1 1"/>
<line x1="180.5" y1="99" x2="180.5" y2="511" stroke="#000" stroke-opacity="0.33" stroke-width="1" stroke-dasharray="1 1"/>
<line x1="193.5" y1="99" x2="193.5" y2="511" stroke="#000" stroke-opacity="0.33" stroke-width="1" stroke-dasharray="1 1"/>
<line x1="207.5" y1="99" x2="207.5" y2="511" stroke="#000" stroke-opacity="0.33" stroke-width="1" stroke-dasharray="1 1"/>
<line x1="221.5" y1="99" x2="221.5" y2="511" stroke="#000" stroke-opacity="0.33" stroke-width="1" stroke-dasharray="1 1"/>
<line x1="235.5" y1="99" x2="235.5" y2="511" stroke="#000" stroke-opacity="0.33" stroke-width="1" stroke-dasharray="1 1"/>
<line x1="248.5" y1="99" x2="248.5" y2="511" stroke="#000" stroke-opacity="0.33" stroke-width="1" stroke-dasharray="1 1"/>
<line x1="262.5" y1="99" x2="262.5" y2="511" stroke="#000" stroke-opacity="0.33" stroke-width="1" stroke-dasharray="1 1"/>
<line x1="276.5" y1="99" x2="276.5" y2="511" stroke="#000" stroke-opacity="0.33" stroke-width="1" stroke-dasharray="1 1"/>
<line x1="290.5" y1="99" x2="290.5" y2="511" stroke="#000" stroke-opacity="0.55" stroke-width="1" stroke-dasharray="1 1"/>
<line x1="303.5" y1="99" x2="303.5" y2="511" stroke="#000" stroke-opacity="0.33" stroke-width="1" stroke-dasharray="1 1"/>
<line x1="317.5" y1="99" x2="317.5" y2="511" stroke="#000" stroke-opacity="0.33" stroke-width="1" stroke-dasharray="1 1"/>
<line x1="331.5" y1="99" x2="331.5" y2="511" stroke="#000" stroke-opacity="0.33" stroke-width="1" stroke-dasharray="1 1"/>
<line x1="345.5" y1="99" x2="345.5" y2="511" stroke="#000" stroke-opacity="0.33" stroke-width="1" stroke-dasharray="1 1"/>
<line x1="358.5" y1="99" x2="358.5" y2="511" stroke="#000" stroke-opacity="0.33" stroke-width="1" stroke-dasharray="1 1"/>
<line x1="372.5" y1="99" x2="372.5" y2="511" stroke="#000" stroke-opacity="0.33" stroke-width="1" stroke-dasharray="1 1"/>
<line x1="386.5" y1="99" x2="386.5" y2="511" stroke="#000" stroke-opacity="0.33" stroke-width="1" stroke-dasharray="1 1"/>
<line x1="400.5" y1="99" x2="400.5" y2="511" stroke="#000" stroke-opacity="0.33" stroke-width="1" stroke-dasharray="1 1"/>
<line x1="413.5" y1="99" x2="413.5" y2="511" stroke="#000" stroke-opacity="0.33" stroke-width="1" stroke-dasharray="1 1"/>
<line x1="427.5" y1="99" x2="427.5" y2="511" stroke="#000" stroke-opacity="0.55" stroke-width="1" stroke-dasharray="1 1"/>
<line x1="441.5" y1="99" x2="441.5" y2="511" stroke="#000" stroke-opacity="0.33" stroke-width="1" stroke-dasharray="1 1"/>
<line x1="455.5" y1="99" x2="455.5" y2="511" stroke="#000" stroke-opacity="0.33" stroke-width="1" stroke-dasharray="1 1"/>
<line x1="468.5" y1="99" x2="468.5" y2="511" stroke="#000" stroke-opacity="0.33" stroke-width="1" stroke-dasharray="1 1"/>
<line x1="482.5" y1="99" x2="482.5" y2="511" stroke="#000" stroke-opacity="0.33" stroke-width="1" stroke-dasharray="1 1"/>
<line x1="496.5" y1="99" x2="496.5" y2="511" stroke="#000" stroke-opacity="0.33" stroke-width="1" stroke-dasharray="1 1"/>
<line x1="510.5" y1="99" x2="510.5" y2="511" stroke="#000" stroke-opacity="0.33" stroke-width="1" stroke-dasharray="1 1"/>
<line x1="523.5" y1="99" x2="523.5" y2="511" stroke="#000" stroke-opacity="0.33" stroke-width="1" stroke-dasharray="1 1"/>
<line x1="537.5" y1="99" x2="537.5" y2="511" stroke="#000" stroke-opacity="0.33" stroke-width="1" stroke-dasharray="1 1"/>
<line x1="551.5" y1="99" x2="551.5" y2="511" stroke="#000" stroke-opacity="0.33" stroke-width="1" stroke-dasharray="1 1"/>
<line x1="565.5" y1="99" x2="565.5" y2="511" stroke="#000" stroke-opacity="0.55" stroke-width="1" stroke-dasharray="1 1"/>
<line x1="578.5" y1="99" x2="578.5" y2="511" stroke="#000" stroke-opacity="0.33" stroke-width="1" stroke-dasharray="1 1"/>
<line x1="592.5" y1="99" x2="592.5" y2="511" stroke="#000" stroke-opacity="0.33" stroke-width="1" stroke-dasharray="1 1"/>
<line x1="606.5" y1="99" x2="606.5" y2="511" stroke="#000" stroke-opacity="0.33" stroke-width="1" stroke-dasharray="1 1"/>
<line x1="620.5" y1="99" x2="620.5" y2="511" stroke="#000" stroke-opacity="0.33" stroke-width="1" stroke-dasharray="1 1"/>
<line x1="633.5" y1="99" x2="633.5" y2="511" stroke="#000" stroke-opacity="0.33" stroke-width="1" stroke-dasharray="1 1"/>
<line x1="647.5" y1="99" x2="647.5" y2="511" stroke="#000" stroke-opacity="0.33" stroke-width="1" stroke-dasharray="1 1"/>
<line x1="661.5" y1="99" x2="661.5" y2="511" stroke="#000" stroke-opacity="0.33" stroke-width="1" stroke-dasharray="1 1"/>
<line x1="675.5" y1="99" x2="675.5" y2="511" stroke="#000" stroke-opacity="0.33" stroke-width="1" stroke-dasharray="1 1"/>
<line x1="688.5" y1="99" x2="688.5" y2="511" stroke="#000" stroke-opacity="0.33" stroke-width="1" stroke-dasharray="1 1"/>
<line x1="702.5" y1="99" x2="702.5" y2="511" stroke="#000" stroke-opacity="0.55" stroke-width="1" stroke-dasharray="1 1"/>
<line x1="716.5" y1="99" x2="716.5" y2="511" stroke="#000" stroke-opacity="0.33" stroke-width="1" stroke-dasharray="1 1"/>
<line x1="730.5" y1="99" x2="730.5" y2="511" stroke="#000" stroke-opacity="0.33" stroke-width="1" stroke-dasharray="1 1"/>
<line x1="743.5" y1="99" x2="743.5" y2="511" stroke="#000" stroke-opacity="0.33" stroke-width="1" stroke-dasharray="1 1"/>
<line x1="757.5" y1="99" x2="757.5" y2="511" stroke="#000" stroke-opacity="0.33" stroke-width="1" stroke-dasharray="1 1"/>
<line x1="771.5" y1="99" x2="771.5" y2="511" stroke="#000" stroke-opacity="0.33" stroke-width="1" stroke-dasharray="1 1"/>
<line x1="785.5" y1="99" x2="785.5" y2="511" stroke="#000" stroke-opacity="0.33" stroke-width="1" stroke-dasharray="1 1"/>
<line x1="798.5" y1="99" x2="798.5" y2="511" stroke="#000" stroke-opacity="0.33" stroke-width="1" stroke-dasharray="1 1"/>
<line x1="812.5" y1="99" x2="812.5" y2="511" stroke="#000" stroke-opacity="0.33" stroke-width="1" stroke-dasharray="1 1"/>
<line x1="158" y1="112.5" x2="815" y2="112.5" stroke="#000" stroke-opacity="0.33" stroke-width="1" stroke-dasharray="1 1"/>
<line x1="158" y1="126.5" x2="815" y2="126.5" stroke="#000" stroke-opacity="0.33" stroke-width="1" stroke-dasharray="1 1"/>
<line x1="158" y1="139.5" x2="815" y2="139.5" stroke="#000" stroke-opacity="0.33" stroke-width="1" stroke-dasharray="1 1"/>
<line x1="158" y1="153.5" x2="815" y2="153.5" stroke="#000" stroke-opacity="0.33" stroke-width="1" stroke-dasharray="1 1"/>
<line x1="158" y1="167.5" x2="815" y2="167.5" stroke="#000" stroke-opacity="0.33" stroke-width="1" stroke-dasharray="1 1"/>
<line x1="158" y1="181.5" x2="815" y2="181.5" stroke="#000" stroke-opacity="0.33" stroke-width="1" stroke-dasharray="1 1"/>
<line x1="158" y1="194.5" x2="815" y2="194.5" stroke="#000" stroke-opacity="0.33" stroke-width="1" stroke-dasharray="1 1"/>
<line x1="158" y1="208.5" x2="815" y2="208.5" stroke="#000" stroke-opacity="0.33" stroke-width="1" stroke-dasharray="1 1"/>
<line x1="158" y1="222.5" x2="815" y2="222.5" stroke="#000" stroke-opacity="0.33" stroke-width="1" stroke-dasharray="1 1"/>
<line x1="158" y1="236.5" x2="815" y2="236.5" stroke="#000" stroke-opacity="0.55" stroke-width="1" stroke-dasharray="1 1"/>
<line x1="158" y1="249.5" x2="815" y2="249.5" stroke="#000" stroke-opacity="0.33" stroke-width="1" stroke-dasharray="1 1"/>
<line x1="158" y1="263.5" x2="815" y2="263.5" stroke="#000" stroke-opacity="0.33" stroke-width="1" stroke-dasharray="1 1"/>
<line x1="158" y1="277.5" x2="815" y2="277.5" stroke="#000" stroke-opacity="0.33" stroke-width="1" stroke-dasharray="1 1"/>
<line x1="158" y1="291.5" x2="815" y2="291.5" stroke="#000" stroke-opacity="0.33" stroke-width="1" stroke-dasharray="1 1"/>
<line x1="158" y1="304.5" x2="815" y2="304.5" stroke="#000" stroke-opacity="0.33" stroke-width="1" stroke-dasharray="1 1"/>
<line x1="158" y1="318.5" x2="815" y2="318.5" stroke="#000" stroke-opacity="0.33" stroke-width="1" stroke-dasharray="1 1"/>
<line x1="158" y1="332.5" x2="815" y2="332.5" stroke="#000" stroke-opacity="0.33" stroke-width="1" stroke-dasharray="1 1"/>
<line x1="158" y1="346.5" x2="815" y2="346.5" stroke="#000" stroke-opacity="0.33" stroke-width="1" stroke-dasharray="1 1"/>
<line x1="158" y1="359.5" x2="815" y2="359.5" stroke="#000" stroke-opacity="0.33" stroke-width="1" stroke-dasharray="1 1"/>
<line x1="158" y1="373.5" x2="815" y2="373.5" stroke="#000" stroke-opacity="0.55" stroke-width="1" stroke-dasharray="1 1"/>
<line x1="158" y1="387.5" x2="815" y2="387.5" stroke="#000" stroke-opacity="0.33" stroke-width="1" stroke-dasharray="1 1"/>
<line x1="158" y1="401.5" x2="815" y2="401.5" stroke="#000" stroke-opacity="0.33" stroke-width="1" stroke-dasharray="1 1"/>
<line x1="158" y1="414.5" x2="815" y2="414.5" stroke="#000" stroke-opacity="0.33" stroke-width="1" stroke-dasharray="1 1"/>
<line x1="158" y1="428.5" x2="815" y2="428.5" stroke="#000" stroke-opacity="0.33" stroke-width="1" stroke-dasharray="1 1"/>
<line x1="158" y1="442.5" x2="815" y2="442.5" stroke="#000" stroke-opacity="0.33" stroke-width="1" stroke-dasharray="1 1"/>
<line x1="158" y1="456.5" x2="815" y2="456.5" stroke="#000" stroke-opacity="0.33" stroke-width="1" stroke-dasharray="1 1"/>
<line x1="158" y1="469.5" x2="815" y2="469.5" stroke="#000" stroke-opacity="0.33" stroke-width="1" stroke-dasharray="1 1"/>
<line x1="158" y1="483.5" x2="815" y2="483.5" stroke="#000" stroke-opacity="0.33" stroke-width="1" stroke-dasharray="1 1"/>
<line x1="158" y1="497.5" x2="815" y2="497.5" stroke="#000" stroke-opacity="0.33" stroke-width="1" stroke-dasharray="1 1"/>
<rect x="158" y="96.9" width="657" height="0.9" fill="#a6a6a6"/><rect x="158" y="97.8" width="657" height="1.2" fill="#2a2a2a"/><rect x="158" y="99.9" width="657" height="0.8" fill="#9c9c9c"/>
<rect x="158" y="510.7" width="657" height="1.2" fill="#2a2a2a"/><rect x="158" y="511.9" width="657" height="0.9" fill="#a2a2a2"/><rect x="158" y="509.6" width="657" height="0.8" fill="#9a9a9a"/>
</svg>
<div class="a" style="left:815px;top:50px;width:8px;height:507px;background:linear-gradient(90deg,#a8a8a8,#c9c9c9 25%,#dedede 75%,#d4d4d4)"></div>
<div class="a" style="left:817px;top:210.5px;width:5px;height:185px;background:#7d7d7d;border-radius:2px"></div>
<div class="a" style="left:158px;top:556.5px;width:657px;height:8.5px;background:linear-gradient(#cfcfcf,#e3e3e3,#d4d4d4);border-bottom:1px solid #a8a8a8"></div>
<div class="a" style="left:372.7px;top:557.7px;width:222px;height:5.8px;background:#7b7b7b;border-radius:2px"></div>
<div class="a" style="left:815px;top:556.5px;width:8px;height:8.5px;background:#cbcbcb"></div>
<svg class="a" style="left:160px;top:558px" width="5" height="6" viewBox="0 0 5 6"><path d="M4 0.5L1 3L4 5.5Z" fill="#111"/></svg>
<svg class="a" style="left:809px;top:558px" width="5" height="6" viewBox="0 0 5 6"><path d="M1 0.5L4 3L1 5.5Z" fill="#111"/></svg>
<svg class="a" style="left:816px;top:52px" width="6" height="5" viewBox="0 0 6 5"><path d="M0.5 4L3 1L5.5 4Z" fill="#111"/></svg>
<svg class="a" style="left:816px;top:551px" width="6" height="5" viewBox="0 0 6 5"><path d="M0.5 1L3 4L5.5 1Z" fill="#111"/></svg>
<div class="a" style="left:823px;top:49px;width:201px;height:516px;background:#bfbfbf"></div>
<div class="a" style="left:823px;top:49px;width:1px;height:516px;background:#a0a0a0"></div>
<div class="t" style="left:829px;top:51.3px;">Layers</div>
<div class="t" style="left:827px;top:60.8px;">Opacity:</div>
<div class="a" style="left:856px;top:63.2px;width:162px;height:3px;background:#2b8be0;box-shadow:0 0 0 0.7px #a9b2bc;border-radius:1.5px"></div>
<div class="a" style="left:1016px;top:61px;width:7px;height:7.5px;background:linear-gradient(#fafafa,#dcdcdc);border:1px solid #9a9a9a;border-radius:1px"></div>
<div class="a" style="left:827.5px;top:72.5px;width:196px;height:174.5px;background:#f0f0f0;border:1px solid #a5a5a5"></div>
<div class="a" style="left:828px;top:85px;width:195px;height:11px;background:#2f83c8"></div>
<div class="t" style="left:853px;top:76.5px;font-size:8.2px">out</div>
<div class="t" style="left:853px;top:87.7px;color:#fff;font-size:8.2px">worldbase</div>
<svg class="a" style="left:841px;top:75px" width="8" height="8" viewBox="0 0 8 8"><rect x="0.5" y="0.5" width="7" height="7" fill="#e8eef8" stroke="#3a6ab0"/><path d="M0.5 3H7.5M0.5 5.3H7.5M3 0.5V7.5M5.3 0.5V7.5" stroke="#3a6ab0" stroke-width="0.8"/></svg>
<svg class="a" style="left:841px;top:87px" width="8" height="8" viewBox="0 0 8 8"><rect x="0.5" y="0.5" width="7" height="7" fill="#2f83c8" stroke="#d6e2f2"/><path d="M0.5 3H7.5M0.5 5.3H7.5M3 0.5V7.5M5.3 0.5V7.5" stroke="#d6e2f2" stroke-width="0.8"/></svg>
<svg class="a" style="left:1000px;top:75.5px" width="10" height="7" viewBox="0 0 10 7"><path d="M0.7 3.5Q5 -0.8 9.3 3.5Q5 7.8 0.7 3.5Z" fill="#fff" stroke="#1a1a1a" stroke-width="0.8"/><circle cx="5" cy="3.5" r="1.3" fill="#1a1a1a"/></svg>
<svg class="a" style="left:1000px;top:87.5px" width="10" height="7" viewBox="0 0 10 7"><path d="M0.7 3.5Q5 -0.8 9.3 3.5Q5 7.8 0.7 3.5Z" fill="#fff" stroke="#1a1a1a" stroke-width="0.8"/><circle cx="5" cy="3.5" r="1.3" fill="#1a1a1a"/></svg>
<svg class="a" style="left:1014px;top:75px" width="9" height="9" viewBox="0 0 9 9"><rect x="0.5" y="4" width="5" height="4.5" fill="#333"/><path d="M4 4V2Q4 0.5 6 0.5Q8 0.5 8 2V3.5" stroke="#333" fill="none"/></svg>
<svg class="a" style="left:1014px;top:87px" width="9" height="9" viewBox="0 0 9 9"><rect x="0.5" y="4" width="5" height="4.5" fill="#8a5a40"/><path d="M4 4V2Q4 0.5 6 0.5Q8 0.5 8 2V3.5" stroke="#8a5a40" fill="none"/></svg>
<svg class="a" style="left:137.2px;top:52px" width="5" height="5" viewBox="0 0 5 5"><rect x="0.75" y="0.75" width="3.5" height="3.5" fill="#c8c8c8" stroke="#828282" stroke-width="1.5"/></svg>
<svg class="a" style="left:147.2px;top:52px" width="5" height="5" viewBox="0 0 5 5"><path d="M0.7 0.7L4.3 4.3M4.3 0.7L0.7 4.3" stroke="#7e7e7e" stroke-width="1.5"/></svg>
<svg class="a" style="left:1007px;top:52.3px" width="5" height="5" viewBox="0 0 5 5"><rect x="0.75" y="0.75" width="3.5" height="3.5" fill="#c8c8c8" stroke="#828282" stroke-width="1.5"/></svg>
<svg class="a" style="left:1017px;top:52.3px" width="5" height="5" viewBox="0 0 5 5"><path d="M0.7 0.7L4.3 4.3M4.3 0.7L0.7 4.3" stroke="#7e7e7e" stroke-width="1.5"/></svg>
<svg class="a" style="left:1007px;top:287px" width="5" height="5" viewBox="0 0 5 5"><rect x="0.75" y="0.75" width="3.5" height="3.5" fill="#c8c8c8" stroke="#828282" stroke-width="1.5"/></svg>
<svg class="a" style="left:1017px;top:287px" width="5" height="5" viewBox="0 0 5 5"><path d="M0.7 0.7L4.3 4.3M4.3 0.7L0.7 4.3" stroke="#7e7e7e" stroke-width="1.5"/></svg>
<div class="a" style="left:827px;top:266px;width:44.5px;height:14px;background:#b2b2b2;border:1px solid #a3a3a3"></div>
<div class="a" style="left:871.5px;top:266px;width:36.5px;height:14px;background:#b2b2b2;border:1px solid #a3a3a3"></div>
<div class="a" style="left:908px;top:265px;width:32px;height:15.5px;background:#d4d4d4"></div>
<div class="a" style="left:940px;top:266px;width:84px;height:14.5px;background:#a9a9a9;border:1px solid #9c9c9c"></div>
<div class="t" style="left:834px;top:270px;">Mini-map</div>
<div class="t" style="left:878px;top:270px;">Objects</div>
<div class="t" style="left:914px;top:270px;">Layers</div>
<div class="t" style="left:829px;top:285.5px;">Tilesets</div>
<div class="a" style="left:827.4px;top:295px;width:60px;height:15px;background:#b2b2b2;border:1px solid #a3a3a3"></div>
<div class="t" style="left:834px;top:299.5px;">AutoMap Rules</div>
<div class="a" style="left:887.5px;top:294.5px;width:43.8px;height:16px;background:#d4d4d4"></div>
<div class="t" style="left:894px;top:299.5px;">Montaña1</div>
<div class="a" style="left:931.3px;top:295px;width:79px;height:15px;background:#adadad;border:1px solid #a0a0a0"></div>
<svg class="a" style="left:1014px;top:301px" width="6" height="4" viewBox="0 0 6 4"><path d="M0.5 0.5L5.5 0.5L3 3.5Z" fill="#222"/></svg>
<svg class="a" style="left:827px;top:311px" width="197" height="220" viewBox="827 311 197 220">
<defs><pattern id="tmoss" x="827.2" y="311.3" width="18.9" height="18.9" patternUnits="userSpaceOnUse"><rect width="18.9" height="18.9" fill="#1b2238"/><ellipse cx="1.99" cy="1.99" rx="1.49" ry="1.19" fill="#98c87c"/><ellipse cx="5.97" cy="1.49" rx="1.19" ry="1.39" fill="#4f8a5c"/><ellipse cx="9.95" cy="2.49" rx="1.49" ry="1.19" fill="#98c87c"/><ellipse cx="14.42" cy="1.79" rx="1.19" ry="1.39" fill="#4f8a5c"/><ellipse cx="17.41" cy="2.98" rx="1.49" ry="1.19" fill="#98c87c"/><ellipse cx="3.98" cy="5.47" rx="1.19" ry="1.39" fill="#4f8a5c"/><ellipse cx="7.96" cy="5.97" rx="1.49" ry="1.19" fill="#98c87c"/><ellipse cx="11.94" cy="5.47" rx="1.19" ry="1.39" fill="#4f8a5c"/><ellipse cx="15.92" cy="6.47" rx="1.49" ry="1.19" fill="#98c87c"/><ellipse cx="0.99" cy="7.46" rx="1.49" ry="1.19" fill="#98c87c"/><ellipse cx="2.49" cy="10.44" rx="1.19" ry="1.39" fill="#4f8a5c"/><ellipse cx="6.47" cy="9.45" rx="1.49" ry="1.19" fill="#98c87c"/><ellipse cx="10.44" cy="9.95" rx="1.19" ry="1.39" fill="#4f8a5c"/><ellipse cx="13.93" cy="9.75" rx="1.49" ry="1.19" fill="#98c87c"/><ellipse cx="17.91" cy="10.44" rx="1.19" ry="1.39" fill="#4f8a5c"/><ellipse cx="4.48" cy="13.43" rx="1.49" ry="1.19" fill="#98c87c"/><ellipse cx="8.46" cy="13.43" rx="1.19" ry="1.39" fill="#4f8a5c"/><ellipse cx="12.43" cy="13.93" rx="1.49" ry="1.19" fill="#98c87c"/><ellipse cx="16.41" cy="13.93" rx="1.19" ry="1.39" fill="#4f8a5c"/><ellipse cx="0.99" cy="14.42" rx="1.19" ry="1.39" fill="#4f8a5c"/><ellipse cx="2.49" cy="17.41" rx="1.49" ry="1.19" fill="#98c87c"/><ellipse cx="6.47" cy="16.91" rx="1.19" ry="1.39" fill="#4f8a5c"/><ellipse cx="10.44" cy="17.41" rx="1.49" ry="1.19" fill="#98c87c"/><ellipse cx="14.42" cy="17.11" rx="1.19" ry="1.39" fill="#4f8a5c"/><ellipse cx="17.91" cy="17.71" rx="1.49" ry="1.19" fill="#98c87c"/></pattern></defs>
<rect x="827" y="311" width="197" height="220" fill="#8a8a8a"/>
<rect x="827.20" y="311.30" width="18.90" height="18.90" fill="#1f9272"/>
<rect x="844.90" y="311.30" width="1.2" height="18.90" fill="#3f7fa0" opacity="0.6"/>
<rect x="827.20" y="330.20" width="18.90" height="18.90" fill="#00e020"/>
<clipPath id="nc0"><polygon points="912.25,318.50 903.00,318.00 893.00,319.20 884.20,322.00 884.20,330.20 872.00,335.50 858.70,345.50 850.50,354.00 846.30,363.30 846.30,405.80 865.20,405.80 865.20,349.10 884.20,349.10 884.20,330.20 912.25,330.20"/></clipPath>
<polygon points="912.25,318.50 903.00,318.00 893.00,319.20 884.20,322.00 884.20,330.20 872.00,335.50 858.70,345.50 850.50,354.00 846.30,363.30 846.30,405.80 865.20,405.80 865.20,349.10 884.20,349.10 884.20,330.20 912.25,330.20" fill="#1d2339"/>
<polyline points="912.25,318.50 903.00,318.00 893.00,319.20 884.20,322.00 884.20,330.20 872.00,335.50 858.70,345.50 850.50,354.00 846.30,363.30 846.30,406.00" fill="none" stroke="url(#tmoss)" stroke-width="12" clip-path="url(#nc0)"/>
<clipPath id="nc1"><polygon points="912.25,318.50 921.50,318.00 931.50,319.20 940.30,322.00 940.30,330.20 952.50,335.50 965.80,345.50 974.00,354.00 978.20,363.30 978.20,405.80 959.30,405.80 959.30,349.10 940.30,349.10 940.30,330.20 912.25,330.20"/></clipPath>
<polygon points="912.25,318.50 921.50,318.00 931.50,319.20 940.30,322.00 940.30,330.20 952.50,335.50 965.80,345.50 974.00,354.00 978.20,363.30 978.20,405.80 959.30,405.80 959.30,349.10 940.30,349.10 940.30,330.20 912.25,330.20" fill="#1d2339"/>
<polyline points="912.25,318.50 921.50,318.00 931.50,319.20 940.30,322.00 940.30,330.20 952.50,335.50 965.80,345.50 974.00,354.00 978.20,363.30 978.20,406.00" fill="none" stroke="url(#tmoss)" stroke-width="12" clip-path="url(#nc1)"/>
<rect x="902.80" y="349.10" width="18.90" height="18.90" fill="#1d2339"/>
<polygon points="873.00,405.80 903.20,405.80 903.20,433.00 884.20,433.00 884.20,420.00" fill="#1d2339"/>
<polygon points="951.50,405.80 921.30,405.80 921.30,433.00 940.30,433.00 940.30,420.00" fill="#1d2339"/>
<rect x="903.2" y="424.6" width="18.9" height="9" fill="#1d2339"/>
<polygon points="912.25,434.00 903.20,432.50 892.00,427.00 884.20,420.00 873.00,405.80 846.20,405.80 846.20,411.00 849.50,415.50 846.20,420.00 846.20,424.60 865.20,424.60 865.20,443.60 850.00,443.60 865.20,452.00 873.00,462.60 884.20,474.50 893.00,478.50 903.00,480.50 912.25,481.00 912.25,481.00 921.50,480.50 931.50,478.50 940.30,474.50 951.50,462.60 959.30,452.00 974.50,443.60 959.30,443.60 959.30,424.60 978.30,424.60 978.30,420.00 975.00,415.50 978.30,411.00 978.30,405.80 951.50,405.80 940.30,420.00 932.50,427.00 921.30,432.50 912.25,434.00" fill="url(#tmoss)"/>
<polygon points="827.20,405.80 846.10,405.80 846.10,442.00 840.00,443.00 833.00,441.80 827.20,442.50" fill="url(#tmoss)"/>
<polygon points="997.30,405.80 978.40,405.80 978.40,442.00 984.50,443.00 991.50,441.80 997.30,442.50" fill="url(#tmoss)"/>
<line x1="846.5" y1="311" x2="846.5" y2="481.4" stroke="#8a8a8a" stroke-width="1"/>
<line x1="865.5" y1="311" x2="865.5" y2="481.4" stroke="#8a8a8a" stroke-width="1"/>
<line x1="883.5" y1="311" x2="883.5" y2="481.4" stroke="#8a8a8a" stroke-width="1"/>
<line x1="902.5" y1="311" x2="902.5" y2="481.4" stroke="#8a8a8a" stroke-width="1"/>
<line x1="921.5" y1="311" x2="921.5" y2="481.4" stroke="#8a8a8a" stroke-width="1"/>
<line x1="940.5" y1="311" x2="940.5" y2="481.4" stroke="#8a8a8a" stroke-width="1"/>
<line x1="959.5" y1="311" x2="959.5" y2="481.4" stroke="#8a8a8a" stroke-width="1"/>
<line x1="978.5" y1="311" x2="978.5" y2="481.4" stroke="#8a8a8a" stroke-width="1"/>
<line x1="997.5" y1="311" x2="997.5" y2="481.4" stroke="#8a8a8a" stroke-width="1"/>
<line x1="827" y1="330.5" x2="997.3000000000001" y2="330.5" stroke="#8a8a8a" stroke-width="1"/>
<line x1="827" y1="349.5" x2="997.3000000000001" y2="349.5" stroke="#8a8a8a" stroke-width="1"/>
<line x1="827" y1="368.5" x2="997.3000000000001" y2="368.5" stroke="#8a8a8a" stroke-width="1"/>
<line x1="827" y1="386.5" x2="997.3000000000001" y2="386.5" stroke="#8a8a8a" stroke-width="1"/>
<line x1="827" y1="405.5" x2="997.3000000000001" y2="405.5" stroke="#8a8a8a" stroke-width="1"/>
<line x1="827" y1="424.5" x2="997.3000000000001" y2="424.5" stroke="#8a8a8a" stroke-width="1"/>
<line x1="827" y1="443.5" x2="997.3000000000001" y2="443.5" stroke="#8a8a8a" stroke-width="1"/>
<line x1="827" y1="462.5" x2="997.3000000000001" y2="462.5" stroke="#8a8a8a" stroke-width="1"/>
<line x1="827" y1="481.5" x2="997.3000000000001" y2="481.5" stroke="#8a8a8a" stroke-width="1"/>
</svg>
<div class="a" style="left:983px;top:534px;width:40px;height:12.5px;background:#fafafa;border:1px solid #b5b5b5"></div>
<div class="a" style="left:1012px;top:534px;width:11px;height:12.5px;background:#d4d4d4;border:1px solid #b5b5b5"></div>
<div class="t" style="left:986px;top:537.5px;">100 %</div>
<svg class="a" style="left:1015px;top:539px" width="6" height="4" viewBox="0 0 6 4"><path d="M0.5 0.5L5.5 0.5L3 3.5Z" fill="#333"/></svg>
<div class="a" style="left:827px;top:550.5px;width:47.5px;height:14px;background:#b2b2b2;border:1px solid #a3a3a3"></div>
<div class="a" style="left:874.5px;top:550px;width:34.5px;height:15px;background:#d4d4d4"></div>
<div class="a" style="left:909px;top:550.5px;width:115px;height:14px;background:#adadad;border-top:1px solid #a0a0a0"></div>
<div class="t" style="left:834px;top:554.5px;">Terrain Sets</div>
<div class="t" style="left:881.3px;top:554.5px;">Tilesets</div>
<svg class="a" style="left:832.5px;top:250.5px" width="9.5" height="10.5" viewBox="0 0 9.5 10.5"><rect x="0.6" y="1.5" width="7" height="8.5" fill="#f8f8f8" stroke="#b8b8b8" stroke-width="0.7"/><circle cx="6" cy="3.2" r="2.6" fill="#f2d000"/><circle cx="6" cy="3.2" r="1.3" fill="#fff8d0"/><path d="M7.5 8.8H9.3L8.4 10Z" fill="#333"/></svg>
<svg class="a" style="left:845.5px;top:251.5px" width="9.5" height="9" viewBox="0 0 9.5 9"><path d="M4.75 0.5L9 4.8H6.5V8.5H3V4.8H0.5Z" fill="#2a6cc0" stroke="#17468a" stroke-width="0.6"/></svg>
<svg class="a" style="left:860.5px;top:251.5px" width="9" height="9" viewBox="0 0 9 9"><path d="M4.5 8.5L0.5 4.2H3V0.5H6V4.2H8.5Z" fill="#9a9a9a" stroke="#808080" stroke-width="0.5"/></svg>
<svg class="a" style="left:874.5px;top:251.5px" width="9.5" height="9.5" viewBox="0 0 9.5 9.5"><rect x="0.6" y="0.6" width="7" height="6.5" fill="#f0f0f0" stroke="#7a7a7a" stroke-width="0.7"/><rect x="1.8" y="1.8" width="4.8" height="4" fill="#284878"/><rect x="2.5" y="2.5" width="2" height="1" fill="#9ec0f0"/><rect x="3" y="5" width="6" height="4" fill="none" stroke="#6a8ab0" stroke-width="0.6" stroke-dasharray="1 0.6"/></svg>
<svg class="a" style="left:888.5px;top:251px" width="10" height="10" viewBox="0 0 10 10"><path d="M1.2 2.6L2 8.8Q5 10.4 8 8.8L8.8 2.6Z" fill="#a8a8a8" stroke="#1e1e1e" stroke-width="1"/><path d="M3 4.5V8.6M5 4.8V9M7 4.5V8.6" stroke="#ececec" stroke-width="0.8"/><ellipse cx="5" cy="2.4" rx="4.2" ry="1.9" fill="#f0f0f0" stroke="#1e1e1e" stroke-width="1"/><ellipse cx="5" cy="2.4" rx="1.4" ry="0.7" fill="#222"/></svg>
<div class="a" style="left:903.5px;top:252px;width:1px;height:9px;background:#b3b3b3"></div>
<svg class="a" style="left:907px;top:251.5px" width="9.5" height="9.5" viewBox="0 0 9.5 9.5"><rect x="0.5" y="0.5" width="6" height="5.5" fill="#f4f4f4"/><rect x="2.5" y="3" width="6.5" height="5.5" fill="#6aaae8" stroke="#fff" stroke-width="0.6"/><path d="M3.5 5H8" stroke="#b8dcff" stroke-width="0.6"/></svg>
<svg class="a" style="left:922px;top:251.5px" width="7" height="9" viewBox="0 0 7 9"><path d="M1.5 4V2.8Q1.5 0.6 3.5 0.6Q5.5 0.6 5.5 2.8V4" stroke="#4a4a4a" stroke-width="1.1" fill="none"/><rect x="0.5" y="3.8" width="6" height="5" rx="0.5" fill="#4e4e4e"/></svg>
<svg class="a" style="left:1010px;top:250.8px" width="10" height="10" viewBox="0 0 10 10"><rect x="2.5" y="2.5" width="5" height="5" fill="#fafafa" stroke="#666" stroke-width="0.9"/><path d="M5 0.2V1.6M5 8.4V9.8M0.2 5H1.6M8.4 5H9.8M1.6 1.6L2.6 2.6M8.4 1.6L7.4 2.6M1.6 8.4L2.6 7.4M8.4 8.4L7.4 7.4" stroke="#777" stroke-width="0.8"/></svg>
<svg class="a" style="left:832.5px;top:535px" width="9.5" height="10" viewBox="0 0 9.5 10"><rect x="0.6" y="1.3" width="7" height="8.2" fill="#f8f8f8" stroke="#b8b8b8" stroke-width="0.7"/><circle cx="6" cy="3" r="2.6" fill="#f2d000"/><circle cx="6" cy="3" r="1.2" fill="#fff8d0"/></svg>
<svg class="a" style="left:846px;top:535px" width="8.5" height="10" viewBox="0 0 8.5 10"><path d="M2.5 0.6H6.5L8 2.1V9.4H2.5Z" fill="#f6f6f6" stroke="#b0b0b0" stroke-width="0.7"/><path d="M0.5 5H5M3.5 3.5L5 5L3.5 6.5" stroke="#999" stroke-width="0.9" fill="none"/><rect x="5.5" y="1" width="2" height="2" fill="#bfe0f8"/></svg>
<svg class="a" style="left:861px;top:535px" width="8.5" height="10" viewBox="0 0 8.5 10"><path d="M0.6 0.6H5L6.5 2.1V9.4H0.6Z" fill="#f2f2f2" stroke="#b8b8b8" stroke-width="0.7"/><path d="M5 5.2H8" stroke="#aaa" stroke-width="0.9"/><circle cx="6.2" cy="6" r="1.2" fill="none" stroke="#aaa" stroke-width="0.6"/></svg>
<svg class="a" style="left:875px;top:535px" width="9" height="10" viewBox="0 0 9 10"><path d="M0.6 0.6H5L6.5 2.1V9.4H0.6Z" fill="#f4f4f4" stroke="#c0c0c0" stroke-width="0.7"/><circle cx="4" cy="4.2" r="2.2" fill="none" stroke="#888" stroke-width="0.9"/><path d="M5.6 5.8L8.4 9" stroke="#888" stroke-width="1.2"/></svg>
<svg class="a" style="left:889px;top:535.5px" width="9" height="9" viewBox="0 0 9 9"><circle cx="4.5" cy="4.5" r="3.6" fill="#f4f4f4"/><path d="M1.2 4.8Q1 1.5 4.3 1.2Q5.6 1.1 6.5 1.8L5.6 2.9H8V0.6" fill="none" stroke="#d88a20" stroke-width="1.5"/><path d="M7.8 4.2Q8 7.5 4.7 7.8Q3.4 7.9 2.5 7.2L3.4 6.1H1V8.4" fill="none" stroke="#22a848" stroke-width="1.5"/></svg>
<svg class="a" style="left:903px;top:535px" width="10" height="10" viewBox="0 0 10 10"><path d="M1.2 2.6L2 8.8Q5 10.4 8 8.8L8.8 2.6Z" fill="#a8a8a8" stroke="#1e1e1e" stroke-width="1"/><path d="M3 4.5V8.6M5 4.8V9M7 4.5V8.6" stroke="#ececec" stroke-width="0.8"/><ellipse cx="5" cy="2.4" rx="4.2" ry="1.9" fill="#f0f0f0" stroke="#1e1e1e" stroke-width="1"/><ellipse cx="5" cy="2.4" rx="1.4" ry="0.7" fill="#222"/></svg>
<svg class="a" style="left:969.5px;top:536px" width="9.5" height="8" viewBox="0 0 9.5 8"><path d="M8.8 0.5V4.5H1.5" stroke="#444" stroke-width="1" fill="none"/><path d="M0.3 4.5L3 2.3V6.7Z" fill="#444"/></svg>
<div class="a" style="left:871px;top:567px;width:67.5px;height:13px;background:linear-gradient(#dcdcdc,#c8c8c8);border:1px solid #a9a9a9;border-radius:2px"></div>
<svg class="a" style="left:874px;top:569.5px" width="8" height="8" viewBox="0 0 8 8"><rect x="0.5" y="0.5" width="7" height="7" fill="#e8eef8" stroke="#3a6ab0"/><path d="M0.5 3H7.5M0.5 5.3H7.5M3 0.5V7.5M5.3 0.5V7.5" stroke="#3a6ab0" stroke-width="0.8"/></svg>
<div class="t" style="left:884.5px;top:570.5px;font-size:8.2px">worldbase</div>
<svg class="a" style="left:930px;top:572px" width="6" height="4" viewBox="0 0 6 4"><path d="M0.5 0.5L5.5 0.5L3 3.5Z" fill="#333"/></svg>
<div class="a" style="left:942.5px;top:567px;width:41px;height:13px;background:#fafafa;border:1px solid #b0b0b0"></div>
<div class="a" style="left:972px;top:567px;width:11.5px;height:13px;background:#d3d3d3;border:1px solid #b0b0b0"></div>
<div class="t" style="left:945px;top:570.5px;font-size:8.2px">75 %</div>
<svg class="a" style="left:975px;top:572px" width="6" height="4" viewBox="0 0 6 4"><path d="M0.5 0.5L5.5 0.5L3 3.5Z" fill="#333"/></svg>
<svg class="a" style="left:989.5px;top:569.5px" width="9" height="9" viewBox="0 0 9 9"><circle cx="4.5" cy="4.5" r="4" fill="#e0303a"/><path d="M4.5 1.8V5M4.5 6V7" stroke="#fff" stroke-width="1.2"/></svg>
<div class="t" style="left:999.5px;top:570.5px;font-size:8.2px">News</div>
</body></html>
